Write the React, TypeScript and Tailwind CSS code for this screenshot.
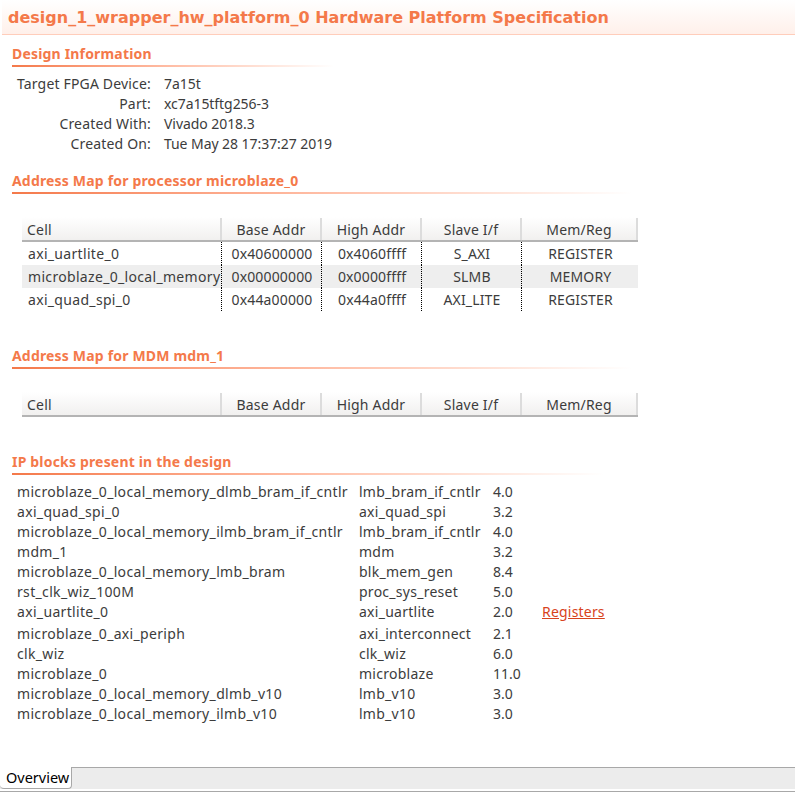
const body = "font-['Noto_Sans',sans-serif] text-[14px] text-[#3c3c3c]";

const infoRows = [
  ["Target FPGA Device:", "7a15t"],
  ["Part:", "xc7a15tftg256-3"],
  ["Created With:", "Vivado 2018.3"],
  ["Created On:", "Tue May 28 17:37:27 2019"],
];

const mapRows = [
  ["axi_uartlite_0", "0x40600000", "0x4060ffff", "S_AXI", "REGISTER"],
  ["microblaze_0_local_memory", "0x00000000", "0x0000ffff", "SLMB", "MEMORY"],
  ["axi_quad_spi_0", "0x44a00000", "0x44a0ffff", "AXI_LITE", "REGISTER"],
];

const ipRows = [
  ["microblaze_0_local_memory_dlmb_bram_if_cntlr", "lmb_bram_if_cntlr", "4.0"],
  ["axi_quad_spi_0", "axi_quad_spi", "3.2"],
  ["microblaze_0_local_memory_ilmb_bram_if_cntlr", "lmb_bram_if_cntlr", "4.0"],
  ["mdm_1", "mdm", "3.2"],
  ["microblaze_0_local_memory_lmb_bram", "blk_mem_gen", "8.4"],
  ["rst_clk_wiz_100M", "proc_sys_reset", "5.0"],
  ["axi_uartlite_0", "axi_uartlite", "2.0"],
  ["microblaze_0_axi_periph", "axi_interconnect", "2.1"],
  ["clk_wiz", "clk_wiz", "6.0"],
  ["microblaze_0", "microblaze", "11.0"],
  ["microblaze_0_local_memory_dlmb_v10", "lmb_v10", "3.0"],
  ["microblaze_0_local_memory_ilmb_v10", "lmb_v10", "3.0"],
];

function SectionHeading({ title, className, lineClass }: { title: string; className: string; lineClass: string }) {
  return (
    <div className={className}>
      <div className="ml-3 h-[22px] text-[14px] leading-[22px] font-bold tracking-[0.18px] text-[#f4794a]">
        {title}
      </div>
      <div className={`ml-3 h-[2px] bg-gradient-to-r from-[#f4794a] to-white ${lineClass}`} />
    </div>
  );
}

function MapHeader() {
  const cols = ["Base Addr", "High Addr", "Slave I/f", "Mem/Reg"];
  return (
    <div className="flex h-[25px] border-b-2 border-[#b4b4b4] bg-gradient-to-b from-white to-[#f1f0ef] pt-px tracking-[0.2px]">
      <div className="flex w-[200px] items-center border-r-2 border-[#dcdcdc] pl-[5px]">Cell</div>
      {cols.map((c, i) => (
        <div
          key={c}
          className={`flex items-center justify-center border-r-2 border-[#dcdcdc] ${i === 3 ? "w-[116px]" : "w-[100px]"}`}
        >
          {c}
        </div>
      ))}
    </div>
  );
}

export default function App() {
  return (
    <div className={`flex h-[792px] w-[795px] flex-col overflow-hidden bg-white ${body}`}>
      {/* Page title */}
      <div className="ml-[2px] h-[35px] border-b border-[#ffcdbb] bg-gradient-to-b from-white to-[#fff0ea] pl-[6px] font-['DejaVu_Sans',sans-serif] text-[16px] leading-[35px] font-bold text-[#f4794a]">
        design_1_wrapper_hw_platform_0 Hardware Platform Specification
      </div>

      <SectionHeading title="Design Information" className="mt-[8px]" lineClass="w-[322px]" />

      <div className="mt-[6px] flex flex-col">
        {infoRows.map(([label, value]) => (
          <div key={label} className="flex h-5 items-center">
            <div className="w-[151px] text-right tracking-[0.17px]">{label}</div>
            <div className="ml-[13px] tracking-[-0.06px]">{value}</div>
          </div>
        ))}
      </div>

      <SectionHeading title="Address Map for processor microblaze_0" className="mt-[17px]" lineClass="w-[620px]" />

      <div className="mt-[23px] ml-[22px] w-[616px]">
        <MapHeader />
        {mapRows.map((row, i) => (
          <div key={row[0]} className={`flex h-[23px] items-center ${i === 1 ? "bg-[#eeeeee]" : ""}`}>
            <div className="flex h-full w-[200px] items-center overflow-hidden border-r border-dotted border-black pl-[6px] tracking-[0.32px] whitespace-nowrap">
              {row[0]}
            </div>
            {row.slice(1).map((cell, j) => (
              <div
                key={j}
                className={`flex h-full items-center justify-center pl-px tracking-[0.15px] ${j === 3 ? "w-[116px]" : "w-[100px] border-r border-dotted border-black"}`}
              >
                {cell}
              </div>
            ))}
          </div>
        ))}
      </div>

      <SectionHeading title="Address Map for MDM mdm_1" className="mt-[34px]" lineClass="w-[620px]" />

      <div className="mt-[23px] ml-[22px] w-[616px]">
        <MapHeader />
      </div>

      <SectionHeading title="IP blocks present in the design" className="mt-[34px]" lineClass="w-[592px]" />

      <div className="mt-[7px] flex flex-col leading-5">
        {ipRows.map(([name, core, version]) => (
          <div key={name} className={`flex items-start ${core === "axi_uartlite" ? "h-[22px]" : "h-5"}`}>
            <div className="ml-[17px] w-[342px] tracking-[0.33px] whitespace-nowrap">{name}</div>
            <div className="w-[134px] tracking-[0.26px] whitespace-nowrap">{core}</div>
            <div className="w-[49px]">{version}</div>
            {core === "axi_uartlite" && <a className="tracking-[0.2px] text-[#d8431c] underline">Registers</a>}
          </div>
        ))}
      </div>

      {/* Bottom tab bar */}
      <div className="mt-auto flex h-[22px] border-t border-[#a8a8a8] bg-[#ececec]">
        <div className="-mt-px flex h-[22px] w-[72px] items-center rounded-b-[4px] border-r border-b border-[#a8a8a8] bg-white pl-[6px] text-[14.5px] text-black">
          Overview
        </div>
      </div>
      <div className="mt-[2px] h-px bg-[#a8a8a8]" />
    </div>
  );
}
